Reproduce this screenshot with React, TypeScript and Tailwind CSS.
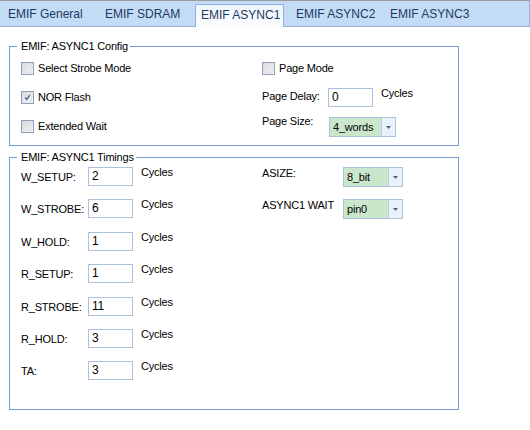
import React from "react";

const tabs = [
  { label: "EMIF General", w: "w-[97px]" },
  { label: "EMIF SDRAM", w: "w-[96px]" },
  { label: "EMIF ASYNC1", w: "w-[95px]", active: true },
  { label: "EMIF ASYNC2", w: "w-[94px]" },
  { label: "EMIF ASYNC3", w: "w-[100px]" },
];

const timings = [
  { name: "W_SETUP:", value: "2" },
  { name: "W_STROBE:", value: "6" },
  { name: "W_HOLD:", value: "1" },
  { name: "R_SETUP:", value: "1" },
  { name: "R_STROBE:", value: "11" },
  { name: "R_HOLD:", value: "3" },
  { name: "TA:", value: "3" },
];

const CheckBox = ({ checked, label }: { checked?: boolean; label: string }) => (
  <div className="flex items-center h-[13px]">
    <div className="w-[13px] h-[13px] border border-[#8e9fb9] bg-gradient-to-br from-[#d4d7dc] to-[#f4f4f4] p-[1px]">
      <div className="w-full h-full border border-[#e2e4e8] flex items-center justify-center">
        {checked && (
          <svg width="9" height="9" viewBox="0 0 9 9">
            <path d="M1.5 4.5 L3.5 7 L7.5 1.5" fill="none" stroke="#3f5fb0" strokeWidth="1.6" />
          </svg>
        )}
      </div>
    </div>
    <span className="ml-[4px]">{label}</span>
  </div>
);

const TextBox = ({ value, w = "w-[45px]" }: { value: string; w?: string }) => (
  <div className={`${w} h-[19px] border border-[#abc2de] bg-white pl-[3px] pt-[2px] leading-[13px] text-[12px]`}>
    {value}
  </div>
);

const Combo = ({ value, w }: { value: string; w: string }) => (
  <div className={`${w} h-[20px] border border-[#abc2de] flex`}>
    <div className="flex-1 bg-[#cbe7cb] pl-[3px] pt-[3px] leading-[13px] text-[11px]">{value}</div>
    <div className="w-[14px] bg-[#e9f1fb] border-l border-[#b9cde5] flex items-center justify-center">
      <svg width="5" height="3" viewBox="0 0 5 3">
        <path d="M0 0 H5 L2.5 3 Z" fill="#4d6185" />
      </svg>
    </div>
  </div>
);

export default function App() {
  return (
    <div
      className="w-[530px] h-[430px] bg-white text-[11px] leading-[13px] text-black tracking-[-0.2px] overflow-hidden"
      style={{ fontFamily: '"Liberation Sans", Arial, sans-serif' }}
    >
      {/* tab strip */}
      <div className="h-[27px] border-t border-[#9c9c9c] bg-[#c4dbf5] border-b border-b-[#8fb2df] border-r border-r-[#8fb2df] flex pl-[2px]">
        {tabs.map((t) => (
          <div key={t.label} className={`${t.w} h-full flex`}>
            {t.active ? (
              <div className="w-[89px] mt-[3px] h-[23px] border border-b-0 border-[#8db0dc] rounded-t-[2px] bg-gradient-to-b from-[#eef5fd] to-[#fbfdff] pl-[5px] pt-[4px] text-[12px] tracking-normal text-[#1d3a63]">
                {t.label}
              </div>
            ) : (
              <div className="pl-[6px] pt-[7px] text-[12px] tracking-normal text-[#1d3a63]">{t.label}</div>
            )}
          </div>
        ))}
      </div>

      {/* config group */}
      <fieldset className="ml-[9px] w-[450px] mt-[12px] h-[107px] border border-[#759ed6]">
        <legend className="ml-[7px] pl-[4px] pr-[2px] leading-[14px]">EMIF: ASYNC1 Config</legend>
        <div className="flex">
          <div className="w-[252px] pl-[11px] pt-[9px] flex flex-col">
            <CheckBox label="Select Strobe Mode" />
            <div className="mt-[16px]">
              <CheckBox checked label="NOR Flash" />
            </div>
            <div className="mt-[16px]">
              <CheckBox label="Extended Wait" />
            </div>
          </div>
          <div className="flex flex-col pt-[9px]">
            <CheckBox label="Page Mode" />
            <div className="flex mt-[13px] h-[19px]">
              <span className="w-[66px] pt-[2px]">Page Delay:</span>
              <TextBox value="0" />
              <span className="ml-[8px] -mt-[1px]">Cycles</span>
            </div>
            <div className="flex mt-[10px] h-[20px]">
              <span className="w-[67px] -mt-[2px]">Page Size:</span>
              <Combo value="4_words" w="w-[67px]" />
            </div>
          </div>
        </div>
      </fieldset>

      {/* timings group */}
      <fieldset className="ml-[9px] w-[450px] mt-[4px] h-[260px] border border-[#759ed6]">
        <legend className="ml-[7px] pl-[4px] pr-[2px] leading-[14px]">EMIF: ASYNC1 Timings</legend>
        <div className="flex">
          <div className="w-[252px] pl-[11px] pt-[3px] flex flex-col gap-[13.4px]">
            {timings.map((r) => (
              <div key={r.name} className="flex h-[19px]">
                <span className="w-[67px] pt-[4px]">{r.name}</span>
                <TextBox value={r.value} />
                <span className="ml-[8px] -mt-[1px]">Cycles</span>
              </div>
            ))}
          </div>
          <div className="flex flex-col pt-[3px]">
            <div className="flex h-[20px]">
              <span className="w-[81px]">ASIZE:</span>
              <Combo value="8_bit" w="w-[60px]" />
            </div>
            <div className="flex h-[20px] mt-[12px]">
              <span className="w-[81px]">ASYNC1 WAIT</span>
              <Combo value="pin0" w="w-[60px]" />
            </div>
          </div>
        </div>
      </fieldset>
    </div>
  );
}
